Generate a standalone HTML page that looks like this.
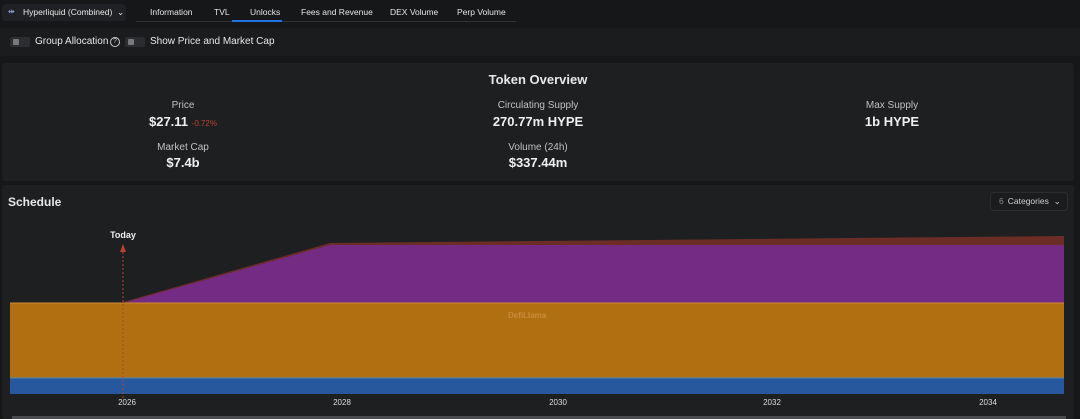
<!DOCTYPE html><html><head><style>
body{margin:0;width:1080px;height:419px;background:#161719;font-family:"Liberation Sans",sans-serif;color:#e8e8e8;position:relative;overflow:hidden}
.a{position:absolute}
.c{position:absolute;text-align:center;transform:translateX(-50%);white-space:nowrap}
.l{font-size:10px;color:#bfc1c4}
.v{font-size:13px;font-weight:bold;color:#f0f0f0}
.tab{position:absolute;top:7px;font-size:8.5px;color:#e6e6e6}
.tg{position:absolute;width:20px;height:10px;background:#2c2d30;border-radius:2px}
.tg:before{content:"";position:absolute;left:3px;top:2px;width:6px;height:6px;background:#77797d;border-radius:1px}
.q{position:absolute;width:8px;height:8px;border:1px solid #ccc;border-radius:50%;font-size:7px;line-height:8px;text-align:center;color:#ccc}
</style></head><body>
<div class="a" style="left:2px;top:4px;width:124px;height:17px;background:#202124;border-radius:4px"></div>
<div class="a" style="left:8px;top:7px;font-size:8px;color:#8cb0e0">⇹</div>
<div class="a" style="left:23px;top:7px;font-size:8.5px;white-space:nowrap">Hyperliquid (Combined) &nbsp;⌄</div>
<div class="a" style="left:136px;top:21px;width:380px;height:1px;background:#2e3034"></div>
<div class="a" style="left:232px;top:20px;width:50px;height:2px;background:#2172e5"></div>
<span class="tab" style="left:150px">Information</span><span class="tab" style="left:214px">TVL</span><span class="tab" style="left:250px">Unlocks</span><span class="tab" style="left:301px">Fees and Revenue</span><span class="tab" style="left:390px">DEX Volume</span><span class="tab" style="left:457px">Perp Volume</span>
<div class="a" style="left:0;top:28px;width:1080px;height:28px;background:#1b1c1e"></div>
<div class="tg" style="left:10px;top:37px"></div><div class="a" style="left:35px;top:36px;font-size:10px;white-space:nowrap">Group Allocation</div>
<div class="q" style="left:110px;top:37px">?</div>
<div class="tg" style="left:125px;top:37px"></div><div class="a" style="left:150px;top:36px;font-size:10px;white-space:nowrap">Show Price and Market Cap</div>
<div class="a" style="left:2px;top:63px;width:1072px;height:118px;background:#1e1f21;border-radius:3px"></div>
<div class="c" style="left:538px;top:72px;font-size:13px;font-weight:bold">Token Overview</div>
<div class="c l" style="left:183px;top:100px">Price</div>
<div class="c v" style="left:183px;top:114px">$27.11 <span style="font-size:8px;font-weight:normal;color:#b8432e">-0.72%</span></div>
<div class="c l" style="left:183px;top:142px">Market Cap</div><div class="c v" style="left:183px;top:155px">$7.4b</div>
<div class="c l" style="left:538px;top:100px">Circulating Supply</div><div class="c v" style="left:538px;top:114px">270.77m HYPE</div>
<div class="c l" style="left:538px;top:142px">Volume (24h)</div><div class="c v" style="left:538px;top:155px">$337.44m</div>
<div class="c l" style="left:892px;top:100px">Max Supply</div><div class="c v" style="left:892px;top:114px">1b HYPE</div>
<div class="a" style="left:2px;top:185px;width:1072px;height:234px;background:#1e1f21;border-radius:3px"></div>
<div class="a" style="left:8px;top:195px;font-size:12px;font-weight:bold">Schedule</div>
<div class="a" style="left:990px;top:192px;width:76px;height:17px;border:1px solid #2c2d31;border-radius:4px;background:#1b1c1e;font-size:8.5px;line-height:17px;color:#d0d0d0;white-space:nowrap"><span style="color:#888;margin:0 4px 0 8px">6</span>Categories &nbsp;⌄</div>
<svg class="a" style="left:0;top:0" width="1080" height="419">
<polygon points="10,302 123,302 330,243 1064,236 1064,302" fill="#6b2d26"/>
<polygon points="10,303 123,303 330,245 1064,245 1064,303" fill="#732b83"/>
<rect x="10" y="303" width="1054" height="75" fill="#b07012"/>
<line x1="10" y1="303" x2="1064" y2="303" stroke="#d08a30" stroke-width="1"/>
<rect x="10" y="378" width="1054" height="16" fill="#27579c"/>
<line x1="10" y1="378" x2="1064" y2="378" stroke="#4a8ac0"/>
<line x1="123" y1="248" x2="123" y2="398" stroke="#b8432e" stroke-dasharray="2,2"/>
<polygon points="123,244 120,252 126,252" fill="#b8432e"/>
<text x="123" y="238" fill="#f0f0f0" font-size="9" font-weight="bold" text-anchor="middle" font-family="Liberation Sans">Today</text>
<text x="508" y="318" fill="#c98a3a" font-size="8" font-weight="bold" font-family="Liberation Sans">DefiLlama</text>
<g fill="#ddd" font-size="8" text-anchor="middle" font-family="Liberation Sans">
<text x="127" y="405">2026</text><text x="342" y="405">2028</text><text x="558" y="405">2030</text><text x="772" y="405">2032</text><text x="988" y="405">2034</text></g>
<rect x="12" y="416" width="1054" height="3" fill="#4a4b4f"/>
</svg>
</body></html>
